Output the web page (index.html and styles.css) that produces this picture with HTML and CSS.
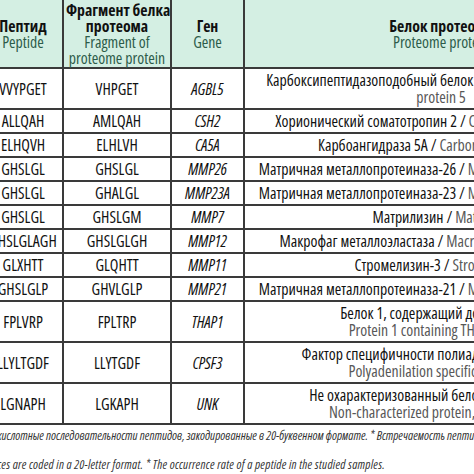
FILE: index.html
```html
<!DOCTYPE html>
<html lang="ru">
<head>
<meta charset="utf-8">
<title>Пептиды</title>
<link rel="stylesheet" href="styles.css">
</head>
<body>
<div class="sheet">
  <table class="peptides">
    <colgroup>
      <col class="c1"><col class="c2"><col class="c3"><col class="c4">
    </colgroup>
    <thead>
      <tr>
        <th><span class="ru">Пептид</span><br><span class="en">Peptide</span></th>
        <th><span class="ru">Фрагмент белка<br>протеома</span><br><span class="en">Fragment of<br>proteome protein</span></th>
        <th><span class="ru">Ген</span><br><span class="en">Gene</span></th>
        <th><span class="ru">Белок протеома</span><br><span class="en">Proteome protein</span></th>
      </tr>
    </thead>
    <tbody>
      <tr><td>VVYPGET</td><td>VHPGET</td><td class="gene">AGBL5</td><td>Карбоксипептидазоподобный белок 5 / <span class="en">Carboxypeptidase-like</span><br><span class="en">protein 5</span></td></tr>
      <tr><td>ALLQAH</td><td>AMLQAH</td><td class="gene">CSH2</td><td>Хорионический соматотропин 2 / <span class="en">Chorionic somatotropin 2</span></td></tr>
      <tr><td>ELHQVH</td><td>ELHLVH</td><td class="gene">CA5A</td><td>Карбоангидраза 5А / <span class="en">Carbonic anhydrase 5A</span></td></tr>
      <tr><td>GHSLGL</td><td>GHSLGL</td><td class="gene">MMP26</td><td>Матричная металлопротеиназа-26 / <span class="en">Matrix metalloproteinase-26</span></td></tr>
      <tr><td>GHSLGL</td><td>GHALGL</td><td class="gene">MMP23A</td><td>Матричная металлопротеиназа-23 / <span class="en">Matrix metalloproteinase-23</span></td></tr>
      <tr><td>GHSLGL</td><td>GHSLGM</td><td class="gene">MMP7</td><td>Матрилизин / <span class="en">Matrilysin</span></td></tr>
      <tr><td>GHSLGLAGH</td><td>GHSLGLGH</td><td class="gene">MMP12</td><td>Макрофаг металлоэластаза / <span class="en">Macrophage metalloelastase</span></td></tr>
      <tr><td>GLXHTT</td><td>GLQHTT</td><td class="gene">MMP11</td><td>Стромелизин-3 / <span class="en">Stromelysin-3</span></td></tr>
      <tr><td>GHSLGLP</td><td>GHVLGLP</td><td class="gene">MMP21</td><td>Матричная металлопротеиназа-21 / <span class="en">Matrix metalloproteinase-21</span></td></tr>
      <tr><td>FPLVRP</td><td>FPLTRP</td><td class="gene">THAP1</td><td>Белок 1, содержащий домен THAP /<br><span class="en">Protein 1 containing THAP domain</span></td></tr>
      <tr><td>LLYLTGDF</td><td>LLYTGDF</td><td class="gene">CPSF3</td><td>Фактор специфичности полиаденилирования 3 /<br><span class="en">Polyadenilation specificity factor 3</span></td></tr>
      <tr><td>LGNAPH</td><td>LGKAPH</td><td class="gene">UNK</td><td>Не охарактеризованный белок, гомолог UNK /<br><span class="en">Non-characterized protein, UNK homolog</span></td></tr>
    </tbody>
  </table>
  <p class="note">Аминокислотные последовательности пептидов, закодированные в 20-буквенном формате. * Встречаемость пептида в исследованных образцах.</p>
  <p class="note note-en">Amino acid sequences are coded in a 20-letter format. * The occurrence rate of a peptide in the studied samples.</p>
</div>
</body>
</html>
```

FILE: styles.css
```css
html, body {
  margin: 0;
  padding: 0;
  background: #ffffff;
}
body {
  width: 474px;
  height: 474px;
  overflow: hidden;
  font-family: "Open Sans", "DejaVu Sans Condensed", sans-serif;
  font-stretch: 75%;
  color: #111111;
}
.sheet {
  margin-left: -18px;
  margin-top: -2px;
  width: 700px;
}
.peptides {
  border-collapse: collapse;
  table-layout: fixed;
  width: 655px;
  font-size: 15.8px;
}
.c1 { width: 80px; }
.c2 { width: 108px; }
.c3 { width: 73px; }
.c4 { width: 394px; }
.peptides th,
.peptides td {
  border: 2px solid #3a3a3a;
  text-align: center;
  vertical-align: middle;
  padding: 3px 2px 2px;
  line-height: 17px;
  white-space: nowrap;
}
.peptides th {
  background: #d4efe3;
  line-height: 16px;
  padding: 2px 2px 1px;
  font-weight: normal;
}
.peptides th .ru {
  font-weight: bold;
  color: #111;
}
.peptides th .en {
  color: #2d5c4a;
}
.peptides td .en {
  color: #585858;
}
.peptides td.gene {
  font-style: italic;
}
.note {
  margin: 4px 0 0 -11px;
  font-size: 12.4px;
  font-stretch: 87.5%;
  line-height: 14px;
  font-style: italic;
  color: #333333;
  white-space: nowrap;
}
.note-en {
  margin-top: 15px;
  margin-left: -63px;
  letter-spacing: 0.25px;
}
```
